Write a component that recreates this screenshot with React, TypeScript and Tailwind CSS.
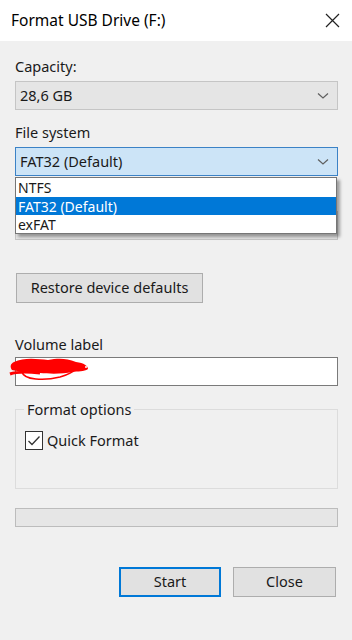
import React from 'react';

function Chevron() {
  return (
    <svg width="12" height="8" viewBox="0 0 12 8" className="shrink-0">
      <path d="M1 1.5 L6 6 L11 1.5" fill="none" stroke="#5f5f5f" strokeWidth="1.2" />
    </svg>
  );
}

export default function App() {
  const font = { fontFamily: '"Noto Sans", "Open Sans", Arial, sans-serif' };

  return (
    <div className="w-[352px] h-[640px] bg-[#f0f0f0] text-[14.5px] text-[#1a1a1a] flex flex-col" style={font}>
      {/* title bar */}
      <div className="h-[41px] bg-white flex items-center justify-between pl-[11px] pr-[12px]">
        <span className="text-[15.5px] text-black">Format USB Drive (F:)</span>
        <svg width="15" height="15" viewBox="0 0 15 15">
          <path d="M1 1 L14 14 M14 1 L1 14" stroke="#222" strokeWidth="1.2" />
        </svg>
      </div>

      <div className="flex flex-col px-[15px] pr-[14px]">
        <div className="mt-[15px] leading-[20px]">Capacity:</div>
        <div className="mt-[5px] h-[29px] bg-[#e5e5e5] border border-[#c5c5c5] flex items-center justify-between pl-[4px] pr-[8px]">
          <span>28,6 GB</span>
          <Chevron />
        </div>

        <div className="mt-[12px] leading-[20px]">File system</div>
        <div className="relative mt-[5px]">
          <div className="h-[29px] bg-[#cce4f7] border border-[#3b82c6] flex items-center justify-between pl-[4px] pr-[8px]">
            <span>FAT32 (Default)</span>
            <Chevron />
          </div>
          {/* allocation unit combo behind the open list */}
          <div className="mt-[35px] h-[29px] bg-[#e5e5e5] border border-[#c5c5c5]" />

          {/* dropdown list */}
          <div className="absolute left-0 right-[1px] top-[30px] bg-white border border-[#767676] shadow-[3px_3px_3px_rgba(0,0,0,0.35)] flex flex-col text-[14px] leading-[17px]">
            <div className="h-[19px] pl-[2px] flex items-center">NTFS</div>
            <div className="h-[18px] pl-[2px] flex items-center bg-[#0078d7] text-white">FAT32 (Default)</div>
            <div className="h-[18px] pl-[2px] flex items-center">exFAT</div>
          </div>
        </div>

        <div className="mt-[33px]">
          <div className="ml-[1px] w-[187px] h-[30px] bg-[#e1e1e1] border border-[#adadad] flex items-center justify-center">
            Restore device defaults
          </div>
        </div>

        <div className="mt-[31px] leading-[20px]">Volume label</div>
        <div className="relative mt-[3px] h-[29px] bg-white border border-[#7a7a7a]">
          <svg className="absolute left-[-12px] top-[-4px]" width="96" height="32" viewBox="0 0 96 32">
            <path
              d="M10 8 C20 3 34 5 44 6 C54 4 62 4 72 8 C80 9 84 12 84 15 C80 18 74 17 68 18 C60 20 46 20 36 19 C24 19 14 17 8 16 C6 13 6 10 10 8 Z"
              fill="#ff0000"
            />
            <path d="M6 20 C14 17 26 18 36 19" stroke="#ff0000" strokeWidth="3" fill="none" />
            <path d="M18 18 C20 26 40 27 56 23 C66 20 70 17 72 15" stroke="#ff0000" strokeWidth="1.6" fill="none" />
            <circle cx="82" cy="13" r="1" fill="#ffffff" />
          </svg>
        </div>

        {/* format options group */}
        <div className="relative mt-[23px] h-[80px] border border-[#dcdcdc]">
          <span className="absolute left-[8px] top-[-11px] px-[3px] bg-[#f0f0f0] leading-[20px]">Format options</span>
          <div className="mt-[20px] ml-[9px] flex items-center gap-[4px]">
            <div className="w-[18px] h-[19px] bg-white border border-[#333] flex items-center justify-center">
              <svg width="14" height="12" viewBox="0 0 14 12">
                <path d="M1.5 6 L5 9.5 L12.5 1.5" fill="none" stroke="#333" strokeWidth="1.3" />
              </svg>
            </div>
            <span>Quick Format</span>
          </div>
        </div>

        <div className="mt-[19px] h-[19px] bg-[#e6e6e6] border border-[#bcbcbc]" />

        <div className="mt-[40px] flex justify-end gap-[12px] pr-[2px]">
          <div className="w-[102px] h-[30px] bg-[#e1e1e1] border-2 border-[#0078d7] flex items-center justify-center">
            Start
          </div>
          <div className="w-[103px] h-[30px] bg-[#e1e1e1] border border-[#adadad] flex items-center justify-center">
            Close
          </div>
        </div>
      </div>
    </div>
  );
}
